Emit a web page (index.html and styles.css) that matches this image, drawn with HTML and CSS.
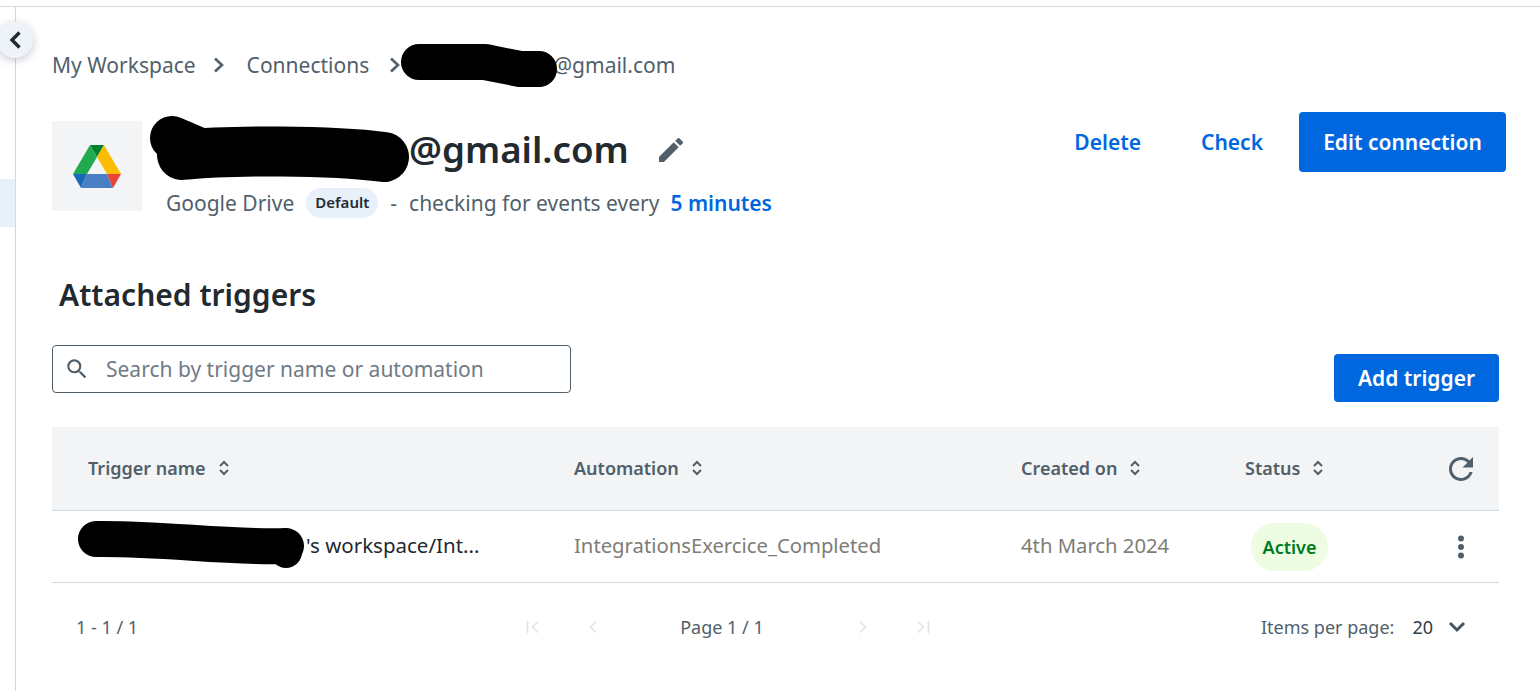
FILE: index.html
```html
<!DOCTYPE html>
<html lang="en">
<head>
<meta charset="utf-8">
<title>Connection</title>
<link rel="stylesheet" href="styles.css">
</head>
<body>
<div class="app">
  <aside class="sidebar">
    <div class="side-active"></div>
    <button class="collapse" aria-label="Collapse"><svg width="16" height="20" viewBox="0 0 16 20"><path d="M12.500 2.500 5 10l7.500 7.500" fill="none" stroke="#1f2a35" stroke-width="3.400"/></svg></button>
  </aside>
  <main class="main">
    <nav class="crumbs">
      <span>My Workspace</span>
      <svg class="crumb-sep" width="14" height="18" viewBox="0 0 14 18"><path d="M3 2.500 10 9l-7 6.500" fill="none" stroke="#515f6b" stroke-width="2.600"/></svg>
      <span>Connections</span>
      <svg class="crumb-sep tight" width="14" height="18" viewBox="0 0 14 18"><path d="M3 2.500 10 9l-7 6.500" fill="none" stroke="#515f6b" stroke-width="2.600"/></svg>
      <span class="crumb-hidden"></span><span>@gmail.com</span>
    </nav>

    <header class="head">
      <div class="logo-box">
        <svg width="48" height="43" viewBox="0 0 48 43">
          <path d="M17 0h14L24 12z" fill="#00832d"/>
          <path d="M17 0 0 29h14L24 12z" fill="#21aa4f"/>
          <path d="M31 0l17 29H34L24 12z" fill="#fbbc04"/>
          <path d="M0 29h14L8 43z" fill="#1a69b8"/>
          <path d="M14 29h20l6 14H8z" fill="#4a7fc6"/>
          <path d="M34 29h14l-8 14z" fill="#ea4335"/>
        </svg>
      </div>
      <div class="head-info">
        <div class="title-row">
          <span class="title-hidden"></span>
          <h1 class="title">@gmail.com</h1>
          <svg class="edit" width="32" height="32" viewBox="0 0 24 24"><path fill="#515f6b" d="M3 17.250V21h3.750L17.810 9.940l-3.750-3.750L3 17.250zM20.710 7.040c.39-.39.39-1.020 0-1.410l-2.340-2.340c-.39-.39-1.020-.39-1.410 0l-1.830 1.830 3.750 3.750 1.830-1.830z"/></svg>
        </div>
        <div class="sub">
          <span>Google Drive</span>
          <span class="pill-default">Default</span>
          <span class="dash">-</span>
          <span>checking for events every</span>
          <a class="link-strong">5 minutes</a>
        </div>
      </div>
      <div class="head-actions">
        <button class="btn-text">Delete</button>
        <button class="btn-text">Check</button>
        <button class="btn-primary btn-edit">Edit connection</button>
      </div>
    </header>

    <h2 class="section-title">Attached triggers</h2>

    <div class="toolbar">
      <label class="search">
        <svg width="26" height="26" viewBox="0 0 24 24"><path fill="#515f6b" d="M15.500 14h-.79l-.28-.27A6.470 6.470 0 0 0 16 9.500 6.500 6.500 0 1 0 9.500 16c1.610 0 3.090-.59 4.230-1.570l.27.28v.79l5 4.990L20.490 19l-4.990-5zm-6 0C7.010 14 5 11.990 5 9.500S7.010 5 9.500 5 14 7.010 14 9.500 11.990 14 9.500 14z"/></svg>
        <span class="placeholder">Search by trigger name or automation</span>
      </label>
      <button class="btn-primary btn-add">Add trigger</button>
    </div>

    <section class="table">
      <div class="row row-head">
        <div class="th th-first">Trigger name <svg class="sort" width="12" height="16" viewBox="0 0 12 16"><path d="M2 6l4-4 4 4M2 10l4 4 4-4" fill="none" stroke="#515f6b" stroke-width="2"/></svg></div>
        <div class="th">Automation <svg class="sort" width="12" height="16" viewBox="0 0 12 16"><path d="M2 6l4-4 4 4M2 10l4 4 4-4" fill="none" stroke="#515f6b" stroke-width="2"/></svg></div>
        <div class="th">Created on <svg class="sort" width="12" height="16" viewBox="0 0 12 16"><path d="M2 6l4-4 4 4M2 10l4 4 4-4" fill="none" stroke="#515f6b" stroke-width="2"/></svg></div>
        <div class="th">Status <svg class="sort" width="12" height="16" viewBox="0 0 12 16"><path d="M2 6l4-4 4 4M2 10l4 4 4-4" fill="none" stroke="#515f6b" stroke-width="2"/></svg></div>
        <div class="th-icon"><svg width="36" height="36" viewBox="0 0 24 24"><path fill="#515f6b" d="M17.650 6.350C16.200 4.900 14.210 4 12 4c-4.420 0-7.990 3.580-7.990 8s3.570 8 7.990 8c3.730 0 6.840-2.550 7.730-6h-2.080c-.82 2.330-3.040 4-5.650 4-3.310 0-6-2.690-6-6s2.690-6 6-6c1.660 0 3.140.69 4.220 1.780L13 11h7V4l-2.350 2.350z"/></svg></div>
      </div>
      <div class="row row-body">
        <div class="td td-name">'s workspace/Int...</div>
        <div class="td">IntegrationsExercice_Completed</div>
        <div class="td">4th March 2024</div>
        <div class="td-status"><span class="pill-active">Active</span></div>
        <div class="td-icon"><svg width="8" height="26" viewBox="0 0 8 26"><circle cx="4" cy="4.500" r="3" fill="#515f6b"/><circle cx="4" cy="13" r="3" fill="#515f6b"/><circle cx="4" cy="21.500" r="3" fill="#515f6b"/></svg></div>
      </div>
    </section>

    <footer class="pager">
      <div class="pager-count">1 - 1 / 1</div>
      <div class="pager-nav">
        <svg width="16" height="16" viewBox="0 0 16 16"><path d="M2.500 2v12M13 2.500 7.500 8l5.500 5.500" fill="none" stroke="#e2e3e5" stroke-width="1.600"/></svg>
        <svg width="16" height="16" viewBox="0 0 16 16"><path d="M11 2.500 5.500 8l5.500 5.500" fill="none" stroke="#e2e3e5" stroke-width="1.600"/></svg>
        <span class="pager-page">Page 1 / 1</span>
        <svg width="16" height="16" viewBox="0 0 16 16"><path d="M5 2.500 10.500 8 5 13.500" fill="none" stroke="#e2e3e5" stroke-width="1.600"/></svg>
        <svg width="16" height="16" viewBox="0 0 16 16"><path d="M13.500 2v12M3 2.500 8.500 8 3 13.500" fill="none" stroke="#e2e3e5" stroke-width="1.600"/></svg>
      </div>
      <div class="pager-size">
        <span>Items per page:</span>
        <span class="pager-value">20</span>
        <svg width="20" height="14" viewBox="0 0 20 14"><path d="M3 3l7 7 7-7" fill="none" stroke="#47535e" stroke-width="3"/></svg>
      </div>
    </footer>
  </main>
</div>
<svg class="redactions" width="1540" height="691" viewBox="0 0 1540 691" aria-hidden="true">
  <g fill="none" stroke="#000" stroke-linecap="round" stroke-linejoin="round">
    <path stroke-width="36" d="M419 62H485L520 69H539"/>
    <path stroke-width="50" d="M182 155C230 150 330 150 384 157"/>
    <path stroke-width="44" d="M172 138L200 150"/>
    <path stroke-width="36" d="M96 539C160 538 230 548 286 546"/>
    <path stroke-width="32" d="M286 552V550"/>
  </g>
</svg>
</body>
</html>
```

FILE: styles.css
```css
* { box-sizing: border-box; }
html, body { margin: 0; padding: 0; background: #fff; }
body {
  font-family: "Noto Sans", "Open Sans", sans-serif;
  color: #515f6b;
  overflow: hidden;
  height: 691px;
  padding-top: 6px;
}
button { font-family: inherit; border: 0; background: none; cursor: pointer; padding: 0; }
h1, h2 { margin: 0; }

.app { display: flex; border-top: 1px solid #d0d9e0; height: 685px; }
.sidebar { position: relative; width: 16px; flex: none; border-right: 1px solid #d0d9e0; }
.side-active { margin-top: 172px; height: 48px; background: #e8f0fa; }
.collapse {
  position: absolute; left: -3px; top: 15px;
  width: 36px; height: 36px; border-radius: 50%;
  background: #eef3fa;
  box-shadow: 0 2px 8px rgba(60, 70, 90, .3);
  display: flex; align-items: center; justify-content: center;
}

.main { flex: 1; min-width: 0; padding: 44px 41px 0 36px; }

.crumbs { display: flex; align-items: center; height: 28px; font-size: 21px; line-height: 28px; }
.crumb-sep { margin: 0 21px 0 16px; }
.crumb-sep.tight { margin: 0 0 0 19px; }
.crumb-hidden { display: inline-block; width: 151px; }

.head { display: flex; align-items: flex-start; margin-top: 33px; margin-right: -7px; }
.logo-box {
  width: 90px; height: 90px; margin-top: 9px; flex: none;
  background: #f3f4f6; display: flex; align-items: center; justify-content: center;
}
.head-info { margin-top: 14px; padding-left: 24px; }
.title-row { display: flex; align-items: center; height: 48px; }
.title-hidden { display: inline-block; width: 243px; }
.title { font-size: 36.700px; line-height: 46px; padding-bottom: 2px; font-weight: 600; color: #22292f; }
.edit { margin-left: 26px; }
.sub { display: flex; align-items: center; height: 30px; margin-top: 14px; font-size: 21px; line-height: 30px; }
.pill-default {
  margin-left: 12px; height: 30px; padding: 0 9px; border-radius: 15px;
  background: #e8f0fa; color: #222b33; font-size: 15px; font-weight: 600; line-height: 29px;
}
.dash { margin: 0 12px; }
.link-strong { margin-left: 11px; color: #0067df; font-weight: 600; }
.head-actions { margin-left: auto; display: flex; align-items: center; height: 60px; }
.btn-text { color: #0067df; font-size: 21px; font-weight: 600; margin-right: 60px; }
.btn-text:nth-child(2) { margin-right: 36px; }
.btn-primary { background: #0067df; color: #fff; font-size: 21px; font-weight: 600; border-radius: 4px; }
.btn-edit { width: 207px; height: 60px; }

.section-title { margin-top: 57px; margin-left: 7px; font-size: 30px; line-height: 40px; font-weight: 600; color: #22292f; }

.toolbar { display: flex; align-items: flex-start; justify-content: space-between; margin-top: 30px; }
.search {
  width: 519px; height: 48px; border: 1px solid #515f6b; border-radius: 4px;
  display: flex; align-items: center; padding-left: 11px; background: #fff;
}
.placeholder { margin-left: 16px; font-size: 21px; color: #6f7b86; }
.btn-add { width: 165px; height: 48px; margin-top: 9px; }

.table { margin-top: 25px; }
.row { display: grid; grid-template-columns: 522px 447px 224px 1fr 80px; align-items: center; border-bottom: 1px solid #d0d9e0; }
.row-head { height: 84px; background: #f3f4f6; }
.row-body { height: 72px; }
.th { display: flex; align-items: center; gap: 12px; font-size: 18px; line-height: 24px; font-weight: 600; color: #515f6b; padding-bottom: 2px; }
.th-first { padding-left: 36px; }
.th-icon { display: flex; justify-content: center; padding-left: 4px; }
.td { font-size: 20.250px; line-height: 28px; color: #7d7d75; padding-bottom: 3px; }
.td-name { padding-left: 254px; color: #22292f; font-size: 20.500px; }
.td-status { padding-left: 6px; }
.pill-active {
  display: inline-flex; align-items: center; justify-content: center;
  width: 77px; height: 48px; border-radius: 24px;
  background: #edfce3; color: #007a1f; font-size: 18px; font-weight: 600;
}
.td-icon { display: flex; justify-content: center; padding-left: 4px; }

.pager { display: grid; grid-template-columns: 473px 406px 1fr; align-items: center; height: 88px; font-size: 18px; }
.pager-count { padding-left: 24px; }
.pager-nav { display: flex; align-items: center; justify-content: space-between; }
.pager-nav svg:nth-child(2) { margin-left: 44px; }
.pager-nav svg:nth-child(4) { margin-right: 44px; }
.pager-page { margin: 0 auto; padding-right: 12px; }
.pager-size { display: flex; align-items: center; justify-content: flex-end; padding-right: 32px; }
.pager-value { margin: 0 14px 0 18px; color: #333d47; }

.redactions { position: absolute; left: 0; top: 0; pointer-events: none; }
```
